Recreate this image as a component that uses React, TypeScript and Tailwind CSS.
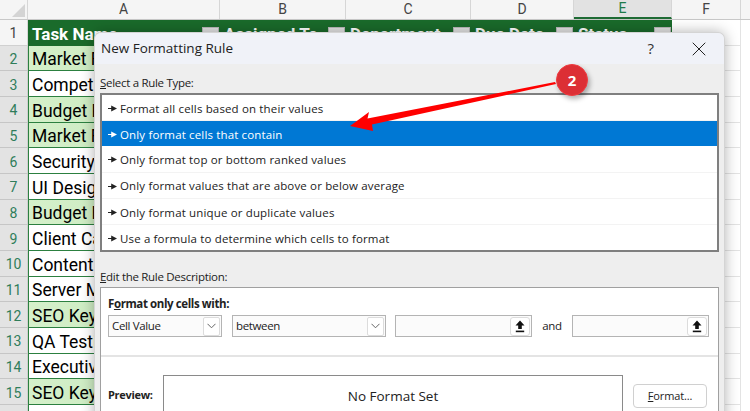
import { X } from "lucide-react";

const columns = [
  { name: "A", width: "w-[192px]", label: "Task Name" },
  { name: "B", width: "w-[126px]", label: "Assigned To" },
  { name: "C", width: "w-[125px]", label: "Department" },
  { name: "D", width: "w-[103px]", label: "Due Date" },
  { name: "E", width: "w-[98px]", label: "Status" },
];

const tasks = [
  { name: "Market Fit Study", hit: true },
  { name: "Competitor Analysis", hit: false },
  { name: "Budget Planning", hit: true },
  { name: "Market Fit Report", hit: true },
  { name: "Security Audit", hit: false },
  { name: "UI Design", hit: false },
  { name: "Budget Review", hit: true },
  { name: "Client Call", hit: false },
  { name: "Content Plan", hit: false },
  { name: "Server Maintenance", hit: false },
  { name: "SEO Keywords", hit: true },
  { name: "QA Testing", hit: false },
  { name: "Executive Report", hit: false },
  { name: "SEO Keywords", hit: true },
  { name: "", hit: false },
];

const ruleTypes = [
  "Format all cells based on their values",
  "Only format cells that contain",
  "Only format top or bottom ranked values",
  "Only format values that are above or below average",
  "Only format unique or duplicate values",
  "Use a formula to determine which cells to format",
];

function Marker({ light }: { light?: boolean }) {
  return (
    <svg width="9" height="7" viewBox="0 0 9 7" className={light ? "text-white" : "text-[#222]"}>
      <path d="M0 2.9h3.2V0.4L9 3.5 3.2 6.6V4.1H0z" fill="currentColor" />
    </svg>
  );
}

function Chevron() {
  return (
    <div className="w-[17px] h-[19px] bg-white border border-[#dcdcdc] rounded-[2px] flex items-center justify-center">
      <svg width="9" height="6" viewBox="0 0 9 6" fill="none" stroke="#666" strokeWidth="1">
        <path d="M0.5 0.8 4.5 4.8 8.5 0.8" />
      </svg>
    </div>
  );
}

function Combo({ width, text }: { width: string; text: string }) {
  return (
    <div className={`${width} h-[22px] bg-[#fbfbfb] border border-[#b4b4b4] flex items-center justify-between pl-[3px] pr-[1px] text-[11.5px] tracking-[-0.35px] text-[#222]`}>
      <span>{text}</span>
      <Chevron />
    </div>
  );
}

function RefInput() {
  return (
    <div className="w-[137px] h-[22px] bg-[#fbfbfb] border border-[#b4b4b4] flex items-center justify-end pr-[1px]">
      <div className="w-[20px] h-[19px] bg-white border border-[#dcdcdc] rounded-[3px] flex items-center justify-center">
        <svg width="10" height="13" viewBox="0 0 10 13">
          <path d="M5 0.5 9.5 5.5H6.8V9H3.2V5.5H0.5z" fill="#111" />
          <rect x="0.8" y="10.6" width="8.4" height="1.6" fill="#111" />
        </svg>
      </div>
    </div>
  );
}

function Sheet() {
  return (
    <div className="font-['Roboto',sans-serif]">
      <div className="flex h-[20px] bg-[#f5f5f5] border-b border-[#c8c8c8]">
        <div className="w-[28px] border-r border-[#d6d6d6] flex items-end justify-end p-[2px]">
          <div className="w-0 h-0 border-l-[13px] border-l-transparent border-b-[13px] border-b-[#d4d4d4]" />
        </div>
        {columns.map((c) => (
          <div
            key={c.name}
            className={
              c.name === "E"
                ? `${c.width} bg-[#e2e2e2] border-b-2 border-[#1e6b34] border-r border-r-[#d6d6d6] text-[#1e7a4a] text-[14px] flex items-center justify-center`
                : `${c.width} border-r border-[#d6d6d6] text-[#444] text-[14px] flex items-center justify-center`
            }
          >
            {c.name}
          </div>
        ))}
        <div className="w-[69px] border-r border-[#d6d6d6] text-[#444] text-[14px] flex items-center justify-center">F</div>
      </div>

      <div className="flex h-[25.67px]">
        <div className="w-[28px] shrink-0 bg-[#f5f5f5] border-b border-[#d0d0d0] border-r border-r-[#d6d6d6] flex items-center justify-center pt-[3px] text-[#444] text-[14px]">
          1
        </div>
        {columns.map((c) => (
          <div key={c.name} className={`${c.width} bg-[#1a6b2b] flex items-center justify-between pl-[4px] pr-[1px] overflow-hidden`}>
            <span className="text-white font-bold text-[17px] pt-[4px] whitespace-nowrap">{c.label}</span>
            <div className="w-[17px] h-[17px] self-end mb-[2px] shrink-0 bg-[#e4e4e4] border border-[#b9b9b9]" />
          </div>
        ))}
        <div className="w-[69px] border-b border-r border-[#e3e3e3]" />
      </div>

      {tasks.map((t, i) => (
        <div key={i} className="flex h-[25.67px]">
          <div className="w-[28px] shrink-0 bg-[#e3e3e3] border-b border-[#c6c6c6] border-r border-r-[#cfcfcf] flex items-center justify-center pt-[3px] text-[#2f7d5a] text-[14px]">
            {t.name ? i + 2 : ""}
          </div>
          <div
            className={
              t.hit
                ? "w-[192px] shrink-0 bg-gradient-to-r from-[#d5f0ca] to-[#c3e6b8] border-l border-b border-[#2c8040] pl-[3px] pt-[3px] flex items-center text-[17.5px] text-black whitespace-nowrap overflow-hidden"
                : "w-[192px] shrink-0 bg-white border-l border-b border-[#2c8040] pl-[3px] pt-[3px] flex items-center text-[17.5px] text-black whitespace-nowrap overflow-hidden"
            }
          >
            {t.name}
          </div>
          <div className="w-[452px] shrink-0 bg-white border-b border-[#e3e3e3]" />
          <div className="w-[69px] shrink-0 bg-white border-b border-r border-[#e3e3e3]" />
        </div>
      ))}
    </div>
  );
}

function Dialog() {
  return (
    <div className="absolute left-[94px] top-[32px] w-[631px] h-[400px] rounded-t-[7px] overflow-hidden bg-[#eeeeee] border-t border-x border-[#d4d4d4] shadow-[0_0_14px_rgba(0,0,0,0.3)] flex flex-col font-['Open_Sans',sans-serif] text-[#222]">
      <div className="h-[31px] shrink-0 bg-[#f0f2f8] flex items-center justify-between pl-[6px] pr-[13px]">
        <span className="text-[13.5px] text-[#222]">New Formatting Rule</span>
        <div className="flex items-center gap-[33px]">
          <span className="text-[15px] text-[#333]">?</span>
          <X className="w-[24px] h-[24px] text-[#222]" strokeWidth={1} />
        </div>
      </div>

      <div className="flex-1 px-[5px] flex flex-col">
        <div className="h-[29px] shrink-0 flex items-end pb-[2px] text-[11.5px] tracking-[-0.3px]">
          <span><span className="underline">S</span>elect a Rule Type:</span>
        </div>
        <div className="h-[159px] shrink-0 bg-white border-2 border-[#7f7f7f] flex flex-col">
          {ruleTypes.map((r, i) => (
            <div
              key={r}
              className={
                i === 1
                  ? "flex-1 bg-[#0078d4] text-white flex items-center gap-[3px] pl-[6px] pt-[2px] text-[11.5px] tracking-[0.15px]"
                  : "flex-1 border-b border-[#f3f3f3] last:border-b-0 flex items-center gap-[3px] pl-[6px] pt-[2px] text-[11.5px] tracking-[0.15px]"
              }
            >
              <Marker light={i === 1} />
              <span>{r}</span>
            </div>
          ))}
        </div>
        <div className="h-[35px] shrink-0 flex items-end pb-[2px] text-[11.5px] tracking-[-0.3px]">
          <span><span className="underline">E</span>dit the Rule Description:</span>
        </div>
        <div className="flex-1 bg-white border border-[#a0a0a0] flex flex-col">
          <div className="h-[67px] shrink-0 px-[7px] flex flex-col gap-[3px] pt-[7px]">
            <div className="h-[17px] font-bold text-[11.5px] tracking-[-0.4px] leading-[17px]">
              F<span className="underline">o</span>rmat only cells with:
            </div>
            <div className="flex items-center">
              <Combo width="w-[114px]" text="Cell Value" />
              <div className="w-[10px]" />
              <Combo width="w-[154px]" text="between" />
              <div className="w-[9px]" />
              <RefInput />
              <div className="w-[40px] text-center text-[11.5px] tracking-[-0.35px]">and</div>
              <RefInput />
            </div>
          </div>
          <div className="h-[2px] shrink-0 bg-[#e4e4e4]" />
          <div className="flex pl-[7px] pt-[18px]">
            <div className="w-[55px] pt-[12px] font-bold text-[11px] tracking-[-0.3px]">Preview:</div>
            <div className="w-[460px] h-[80px] border border-[#8a8a8a] flex justify-center pt-[10px] text-[13.5px]">
              No Format Set
            </div>
            <div className="ml-[10px] mt-[9px] w-[74px] h-[24px] rounded-[4px] bg-white border border-[#d0d0d0] flex items-center justify-center text-[11px] tracking-[-0.15px]">
              <span><span className="underline">F</span>ormat...</span>
            </div>
          </div>
        </div>
      </div>
    </div>
  );
}

export default function App() {
  return (
    <div className="relative w-[750px] h-[411px] overflow-hidden bg-white">
      <Sheet />
      <Dialog />
      <svg className="absolute left-0 top-0 pointer-events-none" width="750" height="411" viewBox="0 0 750 411">
        <path d="M350 126 369 112 367.5 118.5 555 82 556 84 372 124.5 373 131z" fill="#ff0000" />
      </svg>
      <div className="absolute left-[556px] top-[64px] w-[32px] h-[32px] rounded-full bg-[#dc2f35] border border-[#f03a3f] shadow-[2px_3px_5px_rgba(0,0,0,0.3)] flex items-center justify-center text-white font-bold text-[15px] font-['Open_Sans',sans-serif]">
        2
      </div>
    </div>
  );
}
